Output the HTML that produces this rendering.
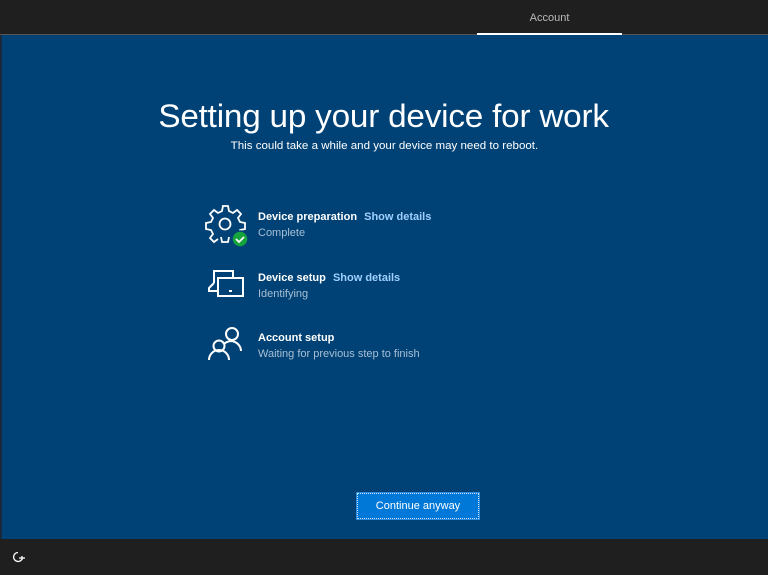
<!DOCTYPE html>
<html><head><meta charset="utf-8"><style>
*{margin:0;padding:0;box-sizing:border-box}
body{width:768px;height:575px;overflow:hidden;background:#004275;font-family:"Liberation Sans",sans-serif;position:relative;color:#fff}
.top{position:absolute;left:0;top:0;width:768px;height:35px;background:#1f1f1f;border-bottom:1px solid #555}
.tab{position:absolute;left:477px;top:0;width:145px;height:35px;border-bottom:2px solid #fff;text-align:center;font-size:11px;line-height:36px;color:#bbb}
.bot{position:absolute;left:0;top:539px;width:768px;height:36px;background:#1f1f1f}
.left{position:absolute;left:0;top:35px;width:2px;height:504px;background:#1a2a3a}
.title{position:absolute;left:0;width:768px;top:98px;text-align:center;font-size:32px;white-space:nowrap}
.title span{display:inline-block;transform:scaleX(1.04);transform-origin:center;letter-spacing:-0.2px}
.sub{position:absolute;left:0;width:768px;top:140px;text-align:center;font-size:11px}
.sub span{display:inline-block;transform:scaleX(1.05)}
.row{position:absolute;left:258px;font-size:11px;white-space:nowrap}
.row b{font-weight:bold}
.row a{color:#9fd0ff;font-weight:bold;margin-left:4px}
.row .s{color:#a8bfd6;margin-top:4px}
.ic{position:absolute}
.btn{position:absolute;left:356px;top:492px;width:124px;height:28px;background:#0078d7;outline:1px dotted #cfe4f8;outline-offset:-2px;border:1px solid #2b8be0;font-size:11px;text-align:center;line-height:27px}
</style></head><body>
<div class="top"><div class="tab">Account</div></div>
<div class="left"></div>
<div class="title"><span>Setting up your device for work</span></div>
<div class="sub"><span>This could take a while and your device may need to reboot.</span></div>

<svg class="ic" style="left:205px;top:204px" width="46" height="46" viewBox="0 0 46 46" fill="none" stroke="#fff" stroke-width="1.8">
<path d="M17 2h6l1 5 4 2 4-3 4 4-3 4 2 4 5 1v6l-5 1-1 3M13 35l-4 3-4-4 3-4-2-4-5-1v-6l5-1 2-4-3-4 4-4 4 3 4-2 1-5M24 33l-1 5h-6l-1-5"/>
<circle cx="20" cy="20" r="5.5"/>
<circle cx="35" cy="35" r="8" fill="#14a33c" stroke="#004275" stroke-width="1.5"/>
<path d="M31 35l3 3 5-5" stroke="#fff" stroke-width="1.8"/>
</svg>
<svg class="ic" style="left:206px;top:268px" width="40" height="32" viewBox="0 0 40 32" fill="none" stroke="#fff" stroke-width="2">
<path d="M8 15V3h19v6M8 15l-5 5v3h8"/>
<rect x="12" y="10" width="25" height="18"/>
<path d="M23 23h3"/>
</svg>
<svg class="ic" style="left:207px;top:326px" width="36" height="36" viewBox="0 0 36 36" fill="none" stroke="#fff" stroke-width="2">
<circle cx="25" cy="8" r="6"/>
<path d="M17 18a10 10 0 0 1 17 7"/>
<circle cx="12" cy="20" r="5.5"/>
<path d="M2 34a10 10 0 0 1 20 0"/>
</svg>

<div class="row" style="top:211px"><div><b>Device preparation</b> <a>Show details</a></div><div class="s">Complete</div></div>
<div class="row" style="top:272px"><div><b>Device setup</b> <a>Show details</a></div><div class="s">Identifying</div></div>
<div class="row" style="top:332px"><div><b>Account setup</b></div><div class="s">Waiting for previous step to finish</div></div>

<div class="btn">Continue anyway</div>
<div class="bot">
<svg style="position:absolute;left:13px;top:12px" width="13" height="12" viewBox="0 0 13 12" fill="none" stroke="#fff" stroke-width="1.3"><path d="M5 1.5a4.5 4.5 0 1 0 4.5 5.5M6 7h6M9 5v4"/></svg>
</div>
</body></html>
